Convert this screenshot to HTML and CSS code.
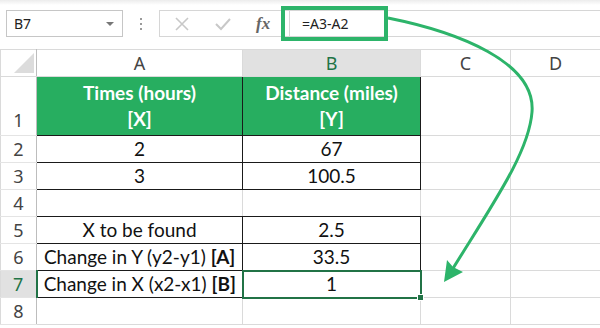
FILE: index.html
```html
<!DOCTYPE html>
<html lang="en">
<head>
    <meta charset="UTF-8">
    <title>Sheet - slope</title>
    <link rel="stylesheet" href="styles.css">
</head>
<body>
    <div class="fbar">
        <div class="namebox">
            <span>B7</span>
            <span class="caret"></span>
        </div>
        <div class="grip"><i></i><i></i><i></i></div>
        <div class="fbtns">
            <svg width="16" height="16" viewBox="0 0 16 16"><path d="M2 2 L14 14 M14 2 L2 14" stroke="#c8c8c8" stroke-width="1.6" fill="none"/></svg>
            <svg width="18" height="16" viewBox="0 0 18 16"><path d="M2 8 L7 13 L16 3" stroke="#c8c8c8" stroke-width="2" fill="none"/></svg>
            <span class="fx">fx</span>
        </div>
        <div class="finput">=A3-A2</div>
    </div>
    <div class="callout"></div>

    <table class="sheet">
        <colgroup>
            <col style="width:36px">
            <col style="width:206px">
            <col style="width:178px">
            <col style="width:90px">
            <col style="width:90px">
        </colgroup>
        <tr class="hdr">
            <td class="corner"><span class="tri"></span></td>
            <td class="ch">A</td>
            <td class="ch sel">B</td>
            <td class="ch">C</td>
            <td class="ch">D</td>
        </tr>
        <tr class="r1">
            <td class="rh">1</td>
            <td class="bx head">Times (hours)<br>[X]</td>
            <td class="bx head">Distance (miles)<br>[Y]</td>
            <td></td>
            <td></td>
        </tr>
        <tr>
            <td class="rh">2</td>
            <td class="bx">2</td>
            <td class="bx">67</td>
            <td></td>
            <td></td>
        </tr>
        <tr>
            <td class="rh">3</td>
            <td class="bx">3</td>
            <td class="bx">100.5</td>
            <td></td>
            <td></td>
        </tr>
        <tr>
            <td class="rh">4</td>
            <td class="under"></td>
            <td class="under"></td>
            <td></td>
            <td></td>
        </tr>
        <tr>
            <td class="rh">5</td>
            <td class="bx">X to be found</td>
            <td class="bx">2.5</td>
            <td></td>
            <td></td>
        </tr>
        <tr>
            <td class="rh">6</td>
            <td class="bx">Change in Y (y2-y1) <b>[A]</b></td>
            <td class="bx">33.5</td>
            <td></td>
            <td></td>
        </tr>
        <tr>
            <td class="rh sel">7</td>
            <td class="bx">Change in X (x2-x1) <b>[B]</b></td>
            <td class="bx active">1</td>
            <td></td>
            <td></td>
        </tr>
        <tr>
            <td class="rh">8</td>
            <td></td>
            <td></td>
            <td></td>
            <td></td>
        </tr>
    </table>

    <svg class="arrow" width="600" height="328" viewBox="0 0 600 328">
        <path d="M388 18 C458 32 536 62 532 112 C529 152 494 202 452 270" stroke="#2db46a" stroke-width="3" fill="none"/>
        <polygon points="444,282 447,260 453,267 463,272" fill="#2db46a"/>
    </svg>
</body>
</html>
```

FILE: styles.css
```css
body {
    margin: 0;
    background-color: white;
    font-family: "Noto Sans", sans-serif;
    position: relative;
    width: 600px;
    height: 328px;
    overflow: hidden;
}

/* formula bar */
.fbar {
    display: flex;
    height: 27px;
    padding: 10px 0 0 6px;
    background: linear-gradient(#ececec 0, #ffffff 5px);
}

.namebox {
    width: 117px;
    box-sizing: border-box;
    border: 1px solid #c6c6c6;
    display: flex;
    align-items: center;
    justify-content: space-between;
    padding: 0 8px 0 7px;
    font-size: 14px;
    color: #222;
}

.caret {
    width: 0;
    height: 0;
    border-left: 4px solid transparent;
    border-right: 4px solid transparent;
    border-top: 4px solid #777;
}

.grip {
    width: 36px;
    display: flex;
    flex-direction: column;
    align-items: center;
    justify-content: center;
    gap: 3px;
}

.grip i {
    width: 2px;
    height: 2px;
    background-color: #9a9a9a;
}

.fbtns {
    width: 130px;
    box-sizing: border-box;
    border: 1px solid #d6d6d6;
    border-right: none;
    display: flex;
    align-items: center;
    padding-left: 14px;
    gap: 24px;
}

.fx {
    font-family: "Liberation Serif", serif;
    font-style: italic;
    font-weight: bold;
    font-size: 17px;
    color: #666;
}

.finput {
    flex: 1;
    box-sizing: border-box;
    border: 1px solid #d6d6d6;
    border-right: none;
    padding-left: 12px;
    font-size: 14px;
    line-height: 25px;
    color: #222;
}

.callout {
    position: absolute;
    left: 281px;
    top: 6px;
    width: 99px;
    height: 27px;
    border: 4px solid #2db46a;
}

/* grid */
.sheet {
    margin-top: 12px;
    border-collapse: collapse;
    table-layout: fixed;
    width: 600px;
    font-family: Lato, "Liberation Sans", sans-serif;
    font-size: 19px;
    color: #111;
}

.sheet td {
    border: 1px solid #dadada;
    height: 25px;
    padding: 0 0 1px 0;
    text-align: center;
    vertical-align: bottom;
    white-space: nowrap;
    line-height: 24px;
}

.sheet .hdr td {
    height: 25px;
    vertical-align: middle;
}

.sheet .r1 td {
    height: 55px;
    padding-bottom: 3px;
}

.corner {
    position: relative;
    border-right-color: #bdbdbd !important;
}

.tri {
    position: absolute;
    right: 2px;
    bottom: 3px;
    width: 0;
    height: 0;
    border-left: 20px solid transparent;
    border-bottom: 20px solid #dcdcdc;
}

.ch {
    font-family: "Noto Sans", sans-serif;
    font-size: 18px;
    color: #444;
}

.ch.sel {
    background-color: #e1e1e1;
    color: #217346;
}

.rh {
    font-family: "Noto Sans", sans-serif;
    font-size: 18px;
    color: #444;
    border-right-color: #bdbdbd !important;
    border-top-color: #e4e4e4 !important;
    border-bottom-color: #e4e4e4 !important;
}

.rh.sel {
    background-color: #e1e1e1;
    color: #217346;
    border-right: 2px solid #217346 !important;
}

.sheet td.bx {
    border-color: #1a1a1a;
}

.sheet td.under {
    border-bottom-color: #1a1a1a;
}

.sheet td.head {
    background-color: #27ae60;
    color: white;
    font-weight: bold;
    line-height: 26px;
}

.active {
    position: relative;
    outline: 2px solid #217346;
    outline-offset: -1px;
}

.active::after {
    content: "";
    position: absolute;
    right: -4px;
    bottom: -4px;
    width: 5px;
    height: 5px;
    background-color: #217346;
    border: 1px solid white;
}

.arrow {
    position: absolute;
    left: 0;
    top: 0;
    pointer-events: none;
}
```
